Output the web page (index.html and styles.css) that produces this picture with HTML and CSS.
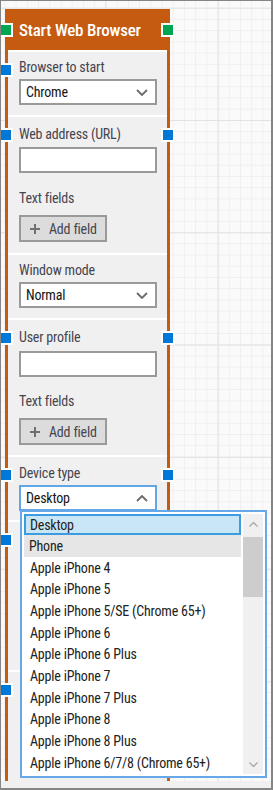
FILE: index.html
```html
<!DOCTYPE html>
<html>
<head>
<meta charset="utf-8">
<link rel="stylesheet" href="styles.css">
</head>
<body>
<div class="frame">
  <div class="canvas">
    <div class="node">
      <div class="node-header">
        <span class="port port-left port-green"></span>
        <span class="node-title">Start Web Browser</span>
        <span class="port port-right port-green"></span>
      </div>
      <div class="node-body">
        <div class="field field-select">
          <span class="port port-left"></span>
          <div class="label">Browser to start</div>
          <div class="select">
            <span>Chrome</span>
            <svg class="chev" width="12" height="7" viewBox="0 0 12 7"><polyline points="1,1 6,6 11,1"/></svg>
          </div>
        </div>
        <div class="field field-text">
          <span class="port port-left"></span>
          <span class="port port-right"></span>
          <div class="label">Web address (URL)</div>
          <div class="input"></div>
          <div class="label label-sub">Text fields</div>
          <div class="btn">
            <svg class="plus" width="10" height="10" viewBox="0 0 10 10"><path d="M5 0V10M0 5H10"/></svg>
            <span>Add field</span>
          </div>
        </div>
        <div class="field field-select">
          <div class="label">Window mode</div>
          <div class="select">
            <span>Normal</span>
            <svg class="chev" width="12" height="7" viewBox="0 0 12 7"><polyline points="1,1 6,6 11,1"/></svg>
          </div>
        </div>
        <div class="field field-text field-text2">
          <span class="port port-left"></span>
          <span class="port port-right"></span>
          <div class="label">User profile</div>
          <div class="input"></div>
          <div class="label label-sub">Text fields</div>
          <div class="btn">
            <svg class="plus" width="10" height="10" viewBox="0 0 10 10"><path d="M5 0V10M0 5H10"/></svg>
            <span>Add field</span>
          </div>
        </div>
        <div class="field field-select field-device">
          <span class="port port-left"></span>
          <span class="port port-right"></span>
          <div class="label label-device">Device type</div>
          <div class="select select-open">
            <span>Desktop</span>
            <svg class="chev" width="12" height="7" viewBox="0 0 12 7"><polyline points="1,6 6,1 11,6"/></svg>
          </div>
          <div class="listbox">
            <ul class="options">
              <li class="opt opt-selected">Desktop</li>
              <li class="opt opt-hover">Phone</li>
              <li class="opt">Apple iPhone 4</li>
              <li class="opt">Apple iPhone 5</li>
              <li class="opt">Apple iPhone 5/SE (Chrome 65+)</li>
              <li class="opt">Apple iPhone 6</li>
              <li class="opt">Apple iPhone 6 Plus</li>
              <li class="opt">Apple iPhone 7</li>
              <li class="opt">Apple iPhone 7 Plus</li>
              <li class="opt">Apple iPhone 8</li>
              <li class="opt">Apple iPhone 8 Plus</li>
              <li class="opt">Apple iPhone 6/7/8 (Chrome 65+)</li>
            </ul>
            <div class="vscroll">
              <div class="sb-btn"><svg width="9" height="5" viewBox="0 0 9 5"><polyline points="0.5,4.5 4.5,0.5 8.5,4.5"/></svg></div>
              <div class="sb-thumb"></div>
              <div class="sb-space"></div>
              <div class="sb-btn"><svg width="9" height="5" viewBox="0 0 9 5"><polyline points="0.5,0.5 4.5,4.5 8.5,0.5"/></svg></div>
            </div>
          </div>
        </div>
        <div class="field field-hidden-a">
          <span class="port port-left"></span>
        </div>
        <div class="field field-hidden-b">
          <span class="port port-left"></span>
        </div>
      </div>
    </div>
  </div>
  <div class="hbar"></div>
</div>
</body>
</html>
```
FILE: styles.css
```css
* { box-sizing: border-box; }
html, body { margin: 0; padding: 0; }
body {
  font-family: Roboto, "Liberation Sans", sans-serif;
  font-stretch: 79%;
  letter-spacing: -0.2px;
  width: 273px;
  height: 790px;
  overflow: hidden;
}
.frame {
  width: 273px;
  height: 790px;
  border: 1px solid #858585;
  border-right-width: 2px;
  border-bottom-width: 2px;
  display: flex;
  flex-direction: column;
}
.canvas {
  flex: 1;
  overflow: hidden;
  position: relative;
  background-color: #fafafa;
  background-image:
    linear-gradient(to right, #e2e2e2 1px, transparent 1px),
    linear-gradient(to bottom, #e2e2e2 1px, transparent 1px),
    linear-gradient(to right, #efefef 1px, transparent 1px),
    linear-gradient(to bottom, #efefef 1px, transparent 1px);
  background-size: 112.3px 100%, 100% 112.3px, 11.23px 100%, 100% 11.23px;
  background-position: 104.4px 6.7px;
  padding: 8px 0 0 4px;
}
.hbar {
  height: 7px;
  background: #f0f0f0;
  flex: none;
}
.node {
  width: 165px;
  border-left: 3px solid #c55a11;
  border-right: 3px solid #c55a11;
  background: #c55a11;
  min-height: 900px;
}
.node-header {
  position: relative;
  height: 41px;
  display: flex;
  align-items: center;
  padding-left: 11px;
}
.node-title {
  color: #fff;
  font-weight: 500;
  font-size: 17px;
}
.node-body {
  background: #f0f0f0;
}
.port {
  position: absolute;
  width: 14px;
  height: 14px;
  border: 2px solid #fff;
  background: #0078d7;
  top: 11px;
}
.port-left { left: -9px; }
.port-right { right: -8px; }
.node-header .port { top: 14px; }
.port-green { background: #00a651; }

.field {
  position: relative;
  border-top: 2px solid #fff;
  padding: 7px 10px 10px 11px;
}
.field-select { padding-bottom: 10px; }
.field-text { padding-top: 9px; padding-bottom: 11px; }
.field-text .input { margin-top: 5px; }
.field-text2 { padding-top: 9px; padding-bottom: 10px; }
.label {
  font-size: 14px;
  line-height: 16px;
  color: #45454f;
}
.field-select .label { margin-bottom: 4px; }
.label-device { margin-top: 1px; }
.field-device { padding-bottom: 9px; }
.select, .input {
  width: 138px;
  height: 26px;
  border: 2px solid #9a9a9a;
  background: #fff;
}
.select {
  display: flex;
  align-items: center;
  justify-content: space-between;
  padding: 0 7px 0 5px;
  font-size: 14px;
  color: #151515;
}
.select-open { border-color: #62a6e6; }
.chev {
  fill: none;
  stroke: #6a6a6a;
  stroke-width: 1.8;
}
.field-text2 .input { margin-top: 6px; }
.label-sub { margin-top: 17px; }
.field-text2 .label-sub { margin-top: 16px; }
.btn {
  margin-top: 9px;
  width: 88px;
  height: 27px;
  border: 2px solid #9a9a9a;
  background: #dcdcdc;
  display: flex;
  align-items: center;
  padding-left: 9px;
  gap: 9px;
  font-size: 14px;
  color: #45454f;
}
.plus {
  fill: none;
  stroke: #707070;
  stroke-width: 2;
}
.field-hidden-a { height: 150px; }
.field-hidden-b { height: 200px; }

.listbox {
  position: absolute;
  left: 12px;
  top: 53px;
  width: 247px;
  height: 268px;
  border: 2px solid #66a8e8;
  background: #fff;
  padding: 2px;
  display: flex;
  gap: 2px;
  z-index: 2;
}
.options {
  list-style: none;
  margin: 0;
  padding: 0;
  width: 217px;
  flex: none;
  overflow: hidden;
}
.opt {
  height: 21.7px;
  line-height: 22px;
  padding-left: 6px;
  font-size: 14px;
  color: #222;
  white-space: nowrap;
}
.opt-selected {
  height: 21px;
  line-height: 18px;
  background: #c9e6f6;
  border: 2px solid #3d9be0;
  padding-left: 4px;
}
.opt-hover {
  height: 21.5px;
  line-height: 22px;
  background: #e6e6e6;
  padding-left: 5px;
}
.vscroll {
  width: 20px;
  flex: none;
  background: #f0f0f0;
  display: flex;
  flex-direction: column;
}
.sb-btn {
  height: 20px;
  display: flex;
  align-items: center;
  justify-content: center;
}
.sb-btn svg {
  fill: none;
  stroke: #a8a8a8;
  stroke-width: 1.3;
}
.sb-thumb {
  margin-top: 3px;
  height: 60px;
  background: #cdcdcd;
}
.sb-space { flex: 1; }
```
